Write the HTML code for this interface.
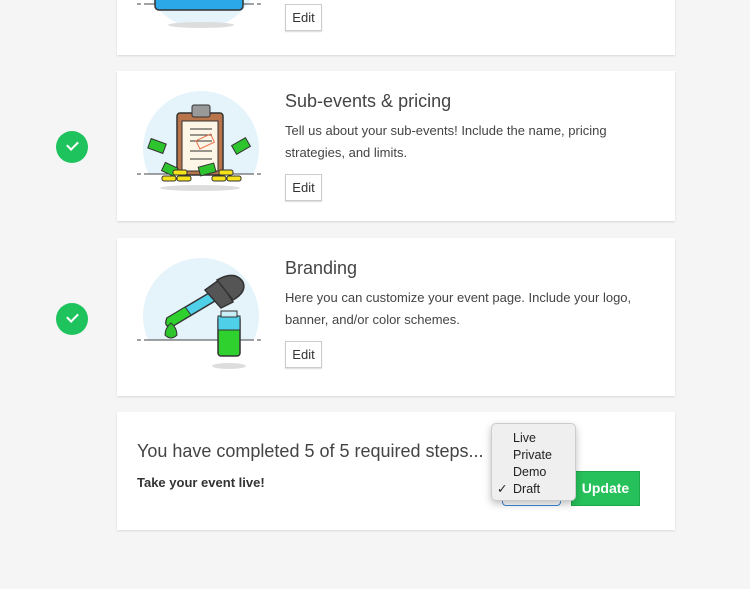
<!DOCTYPE html>
<html><head><style>
body{margin:0;width:750px;height:589px;background:#f5f5f5;font-family:"Liberation Sans",sans-serif;position:relative;overflow:hidden;color:#333}
.card{position:absolute;left:117px;width:558px;background:#fff;box-shadow:0 1px 2px rgba(0,0,0,.12)}
.edit{position:absolute;left:168px;width:35px;height:25px;border:1px solid #ccc;background:#fff;box-shadow:0 1px 1px rgba(0,0,0,.15);font-size:13px;line-height:25px;text-align:center;color:#333}
h2{position:absolute;left:168px;margin:0;font-weight:normal;font-size:18px;color:#444}
p{position:absolute;left:168px;margin:0;font-size:13px;line-height:22px;color:#444;width:345px}
.chk{position:absolute;left:56px;width:32px;height:32px;border-radius:50%;background:#1fc35e}
.chk:after{content:"";position:absolute;left:11px;top:10px;width:9px;height:5px;border-left:2.5px solid #fff;border-bottom:2.5px solid #fff;transform:rotate(-45deg)}
</style></head><body>

<div class="card" style="top:-10px;height:65px">
<svg style="position:absolute;left:20px;top:0" width="130" height="50">
<circle cx="64" cy="-20" r="58" fill="#e5f3fb"/>
<line x1="0" y1="14" x2="127" y2="14" stroke="#444" stroke-dasharray="4 3 110 3 4"/>
<rect x="18" y="0" width="88" height="20" rx="4" fill="#2aa8e8" stroke="#333" stroke-width="1.5"/>
<ellipse cx="64" cy="35" rx="33" ry="3" fill="#ddd"/>
</svg>
<div class="edit" style="top:14px">Edit</div>
</div>

<div class="chk" style="top:131px"></div>
<div class="card" style="top:71px;height:150px">
<svg style="position:absolute;left:20px;top:0" width="130" height="125">
<defs><clipPath id="c1"><rect x="0" y="0" width="130" height="103"/></clipPath></defs>
<circle cx="64" cy="78" r="58" fill="#e5f3fb" clip-path="url(#c1)"/>
<line x1="0" y1="103" x2="127" y2="103" stroke="#444" stroke-dasharray="4 3 110 3 4"/>
<rect x="40" y="42" width="46" height="62" rx="3" fill="#b8744a" stroke="#333" stroke-width="1.5"/>
<rect x="45" y="50" width="36" height="50" fill="#fdf5e6" stroke="#333"/>
<rect x="55" y="34" width="18" height="12" rx="2" fill="#999" stroke="#333"/>
<g stroke="#333"><line x1="53" y1="58" x2="75" y2="58"/><line x1="53" y1="64" x2="75" y2="64"/><line x1="53" y1="70" x2="75" y2="70"/><line x1="53" y1="80" x2="75" y2="80"/><line x1="53" y1="88" x2="75" y2="88"/></g>
<rect x="60" y="66" width="16" height="9" fill="none" stroke="#e8704a" transform="rotate(-25 68 70)"/>
<rect x="12" y="70" width="16" height="10" fill="#2ec42e" stroke="#333" transform="rotate(20 20 75)"/>
<rect x="96" y="70" width="16" height="10" fill="#2ec42e" stroke="#333" transform="rotate(-30 104 75)"/>
<rect x="62" y="94" width="16" height="9" fill="#2ec42e" stroke="#333" transform="rotate(-15 70 98)"/>
<rect x="26" y="94" width="14" height="9" fill="#2ec42e" stroke="#333" transform="rotate(25 33 98)"/>
<g fill="#f5e218" stroke="#333"><rect x="25" y="105" width="14" height="5" rx="2"/><rect x="40" y="105" width="14" height="5" rx="2"/><rect x="75" y="105" width="14" height="5" rx="2"/><rect x="90" y="105" width="14" height="5" rx="2"/><rect x="36" y="99" width="14" height="5" rx="2"/><rect x="82" y="99" width="14" height="5" rx="2"/></g>
<ellipse cx="63" cy="117" rx="40" ry="3" fill="#ddd"/>
</svg>
<h2 style="top:20px">Sub-events &amp; pricing</h2>
<p style="top:49px">Tell us about your sub-events! Include the name, pricing strategies, and limits.</p>
<div class="edit" style="top:103px">Edit</div>
</div>

<div class="chk" style="top:303px"></div>
<div class="card" style="top:238px;height:158px">
<svg style="position:absolute;left:20px;top:0" width="130" height="135">
<defs><clipPath id="c2"><rect x="0" y="0" width="130" height="102"/></clipPath></defs>
<circle cx="64" cy="78" r="58" fill="#e5f3fb" clip-path="url(#c2)"/>
<line x1="0" y1="102" x2="127" y2="102" stroke="#444" stroke-dasharray="4 3 110 3 4"/>
<path d="M30 80 L72 55 L78 63 L36 88 Q26 90 30 80Z" fill="#4fd0e8" stroke="#333" stroke-width="1.5"/>
<path d="M30 80 L48 69 L54 77 L36 88 Q26 90 30 80Z" fill="#2ed12e" stroke="#333" stroke-width="1"/>
<path d="M68 52 L82 42 L96 64 L84 70 Z" fill="#555" stroke="#333" stroke-width="1.5"/>
<path d="M80 42 Q98 32 106 44 Q110 54 96 62 Z" fill="#555" stroke="#333" stroke-width="1.5"/>
<path d="M28 97 Q28 90 34 85 Q40 90 40 97 Q34 103 28 97Z" fill="#2ec42e" stroke="#333"/>
<rect x="81" y="78" width="22" height="40" rx="3" fill="#2ed12e" stroke="#333" stroke-width="1.5"/>
<rect x="81" y="78" width="22" height="14" fill="#4fd0e8" stroke="#333" stroke-width="1"/>
<rect x="84" y="73" width="16" height="6" fill="#c8eef8" stroke="#333"/>
<ellipse cx="92" cy="128" rx="17" ry="3" fill="#ddd"/>
</svg>
<h2 style="top:20px">Branding</h2>
<p style="top:49px;width:362px">Here you can customize your event page. Include your logo, banner, and/or color schemes.</p>
<div class="edit" style="top:103px">Edit</div>
</div>

<div class="card" style="top:412px;height:118px">
<div style="position:absolute;left:20px;top:29px;font-size:18px;color:#444">You have completed 5 of 5 required steps...</div>
<div style="position:absolute;left:20px;top:63px;font-size:13px;font-weight:bold;color:#333">Take your event live!</div>
<div style="position:absolute;left:385px;top:70px;width:57px;height:22px;border:1px solid #3a87d8;border-radius:4px"></div>
<div style="position:absolute;left:454px;top:59px;width:67px;height:33px;background:#26c15a;border:1px solid #1fa84b;color:#fff;font-size:14px;font-weight:bold;line-height:33px;text-align:center">Update</div>
</div>
<div style="position:absolute;left:491px;top:423px;width:83px;height:76px;background:#efefef;border:1px solid #ccc;border-radius:5px;box-shadow:0 3px 8px rgba(0,0,0,.25);font-size:12.5px;color:#222">
<div style="position:absolute;left:21px;top:6px;line-height:17px">Live<br>Private<br>Demo<br>Draft</div>
<div style="position:absolute;left:5px;top:57px">✓</div>
</div>
</body></html>
